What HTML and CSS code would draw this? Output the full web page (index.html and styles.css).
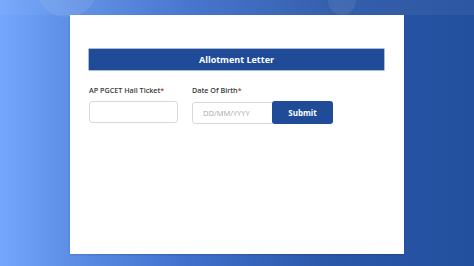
FILE: index.html
```html
<!DOCTYPE html>
<html>
<head>
<meta charset="utf-8">
<link rel="stylesheet" href="styles.css">
</head>
<body>
<div class="band"></div>
<div class="bubble bubble-a"></div>
<div class="bubble bubble-b"></div>
<main class="card">
  <h1 class="title">Allotment Letter</h1>
  <form class="form">
    <div class="field">
      <label class="label">AP PGCET Hall Ticket<span class="req">*</span></label>
      <input class="input input-ht" type="text">
    </div>
    <div class="field">
      <label class="label">Date Of Birth<span class="req">*</span></label>
      <div class="row">
        <input class="input input-dob" type="text" placeholder="DD/MM/YYYY">
        <button class="submit" type="button">Submit</button>
      </div>
    </div>
  </form>
</main>
</body>
</html>
```
FILE: styles.css
```css
html, body {
  margin: 0;
  padding: 0;
}
body {
  width: 474px;
  height: 266px;
  overflow: hidden;
  position: relative;
  background: linear-gradient(90deg, #73a6fc 0%, #5c8ee6 15%, #3f6fcb 40%, #2a57a8 70%, #234f9f 100%);
  font-family: "Open Sans", "Liberation Sans", sans-serif;
  padding-top: 15px;
  box-sizing: border-box;
}
.band {
  position: absolute;
  left: 0;
  top: 0;
  width: 100%;
  height: 15px;
  background: rgba(255, 255, 255, 0.05);
}
.bubble {
  position: absolute;
  border-radius: 50%;
  background: rgba(255, 255, 255, 0.08);
}
.bubble-a {
  left: 36px;
  top: -45px;
  width: 62px;
  height: 62px;
}
.bubble-b {
  left: 328px;
  top: -13px;
  width: 28px;
  height: 28px;
}
.card {
  position: relative;
  width: 334px;
  height: 239px;
  margin: 0 auto;
  background: #fff;
  box-sizing: border-box;
  padding: 34px 20px 0 19px;
  box-shadow: 0 1px 2px rgba(0, 0, 0, 0.15);
}
.title {
  margin: 0;
  height: 21px;
  background: #1f4b99;
  color: #fff;
  font-size: 9px;
  font-weight: 700;
  line-height: 21px;
  text-align: center;
  box-shadow: 0 0 0 0.5px #5577b8;
}
.form {
  display: flex;
  gap: 14px;
  margin-top: 15px;
}
.field {
  display: flex;
  flex-direction: column;
}
.label {
  font-size: 7.2px;
  font-weight: 600;
  color: #3a3a3a;
  line-height: 10px;
  height: 10px;
  margin-bottom: 6px;
}
.req {
  color: #c0392b;
}
.row {
  display: flex;
  align-items: center;
}
.input {
  height: 22px;
  box-sizing: border-box;
  border: 1px solid #d9d9d9;
  border-radius: 3px;
  background: #fff;
  padding: 0 10px;
  font-family: "Open Sans", "Liberation Sans", sans-serif;
  font-size: 7.5px;
  outline: none;
  margin: 0;
}
.input-ht {
  width: 89px;
}
.input-dob {
  width: 81px;
  border-radius: 3px 0 0 3px;
}
.input::placeholder {
  color: #a8a8a8;
}
.submit {
  width: 61px;
  height: 23px;
  margin: 0 0 0 -1px;
  border: none;
  border-radius: 3px;
  background: #1f4b99;
  color: #fff;
  font-family: "Open Sans", "Liberation Sans", sans-serif;
  font-size: 8px;
  font-weight: 700;
  padding: 0;
}
```
